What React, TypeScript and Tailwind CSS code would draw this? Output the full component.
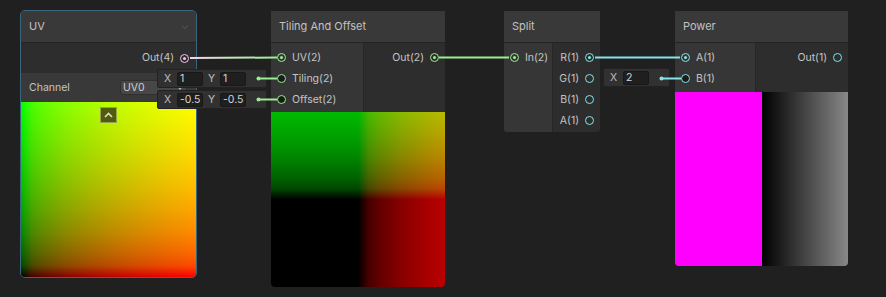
import React from 'react'

type Kind = 'v1' | 'v2' | 'v4'

const ringCls: Record<Kind, string> = {
  v1: 'border-[#84e4e7]',
  v2: 'border-[#9aef92]',
  v4: 'border-[#f2c3ee]',
}
const dotCls: Record<Kind, string> = {
  v1: 'bg-[#84e4e7]',
  v2: 'bg-[#9aef92]',
  v4: 'bg-[#f2c3ee]',
}

function Port({ kind, connected = false, filled = false }: { kind: Kind; connected?: boolean; filled?: boolean }) {
  return (
    <span
      className={`flex h-[9px] w-[9px] shrink-0 items-center justify-center rounded-full border-[1.5px] ${ringCls[kind]} ${
        filled ? 'bg-[#1a1a1a]' : ''
      }`}
    >
      {connected && <span className={`h-[3px] w-[3px] rounded-full ${dotCls[kind]}`} />}
    </span>
  )
}

function InRow({ label, kind, connected, filled }: { label: string; kind: Kind; connected?: boolean; filled?: boolean }) {
  return (
    <div className="flex h-[21px] items-center gap-[6px] pl-[6px]">
      <Port kind={kind} connected={connected} filled={filled} />
      <span>{label}</span>
    </div>
  )
}

function OutRow({ label, kind, connected }: { label: string; kind: Kind; connected?: boolean }) {
  return (
    <div className="flex h-[21px] items-center justify-end gap-[6px] pr-[6px]">
      <span>{label}</span>
      <Port kind={kind} connected={connected} />
    </div>
  )
}

function Header({ title, children }: { title: string; children?: React.ReactNode }) {
  return (
    <div className="flex h-[32px] items-center justify-between border-b border-[#242424] bg-[#393939] pl-[8px] pr-[7px] text-[11px] text-[#c2c2c2]">
      <span>{title}</span>
      {children}
    </div>
  )
}

function VecField({ className, values }: { className: string; values: [string, string][] }) {
  return (
    <div
      className={`absolute flex h-[19px] items-center rounded-[2px] border border-[#222222] bg-[#313131] text-[10.5px] text-[#bdbdbd] ${className}`}
    >
      {values.map(([axis, v], i) => (
        <React.Fragment key={axis}>
          <span className={`${i === 0 ? 'w-[19px]' : 'w-[17px]'} text-center`}>{axis}</span>
          <span className="h-[14px] w-[26px] rounded-[2px] border border-[#181818] bg-[#1f1f1f] pl-[2px] leading-[12px] text-[#d4d4d4]">
            {v}
          </span>
        </React.Fragment>
      ))}
    </div>
  )
}

export default function App() {
  return (
    <div className="relative h-[297px] w-[886px] overflow-hidden bg-[#202020] font-['Inter','Noto_Sans',sans-serif] text-[10.5px] text-[#c4c4c4]">
      {/* UV */}
      <div className="absolute left-[20px] top-[10px] w-[177px] overflow-hidden rounded-[5px] border border-[#3a6680] bg-[#2d2d2d]">
        <Header title="UV">
          <svg width="8" height="6" viewBox="0 0 8 6" className="mt-[1px]">
            <polyline points="1,1.5 4,4.5 7,1.5" fill="none" stroke="#5a5a5a" strokeWidth="1" />
          </svg>
        </Header>
        <div className="flex h-[30px] items-center justify-end gap-[6px] bg-[#2d2d2d] pr-[7px]">
          <span>Out(4)</span>
          <Port kind="v4" connected />
        </div>
        <div className="flex h-[29px] items-center justify-between bg-[#393939] pl-[8px] pr-[9px]">
          <span>Channel</span>
          <div className="flex h-[15px] w-[67px] items-center justify-between rounded-[3px] border border-[#303030] bg-[#474747] pl-[2px] pr-[3px] text-[#cfcfcf]">
            <span>UV0</span>
            <svg width="6" height="4" viewBox="0 0 6 4">
              <polygon points="0,0 6,0 3,4" fill="#bbbbbb" />
            </svg>
          </div>
        </div>
        <div className="relative h-[175px] bg-[linear-gradient(to_bottom,rgb(0,255,0),rgb(0,240,0)_12.5%,rgb(0,224,0)_25%,rgb(0,206,0)_37.5%,rgb(0,186,0)_50%,rgb(0,163,0)_62.5%,rgb(0,136,0)_75%,rgb(0,99,0)_87.5%,rgb(0,72,0)_93.75%,rgb(0,0,0)),linear-gradient(to_right,rgb(0,0,0),rgb(72,0,0)_6.25%,rgb(99,0,0)_12.5%,rgb(136,0,0)_25%,rgb(163,0,0)_37.5%,rgb(186,0,0)_50%,rgb(206,0,0)_62.5%,rgb(224,0,0)_75%,rgb(240,0,0)_87.5%,rgb(255,0,0))] bg-blend-screen">
          <div className="absolute left-[79px] top-[5px] flex h-[16px] w-[17px] items-center justify-center border border-[#9aa24e] bg-[#4f5c0c]">
            <svg width="9" height="6" viewBox="0 0 9 6">
              <polyline points="1,5 4.5,1.5 8,5" fill="none" stroke="#e0e0c0" strokeWidth="1.6" />
            </svg>
          </div>
        </div>
      </div>

      {/* Tiling And Offset */}
      <div className="absolute left-[271px] top-[11px] w-[174px] overflow-hidden rounded-b-[4px] bg-[#2d2d2d]">
        <Header title="Tiling And Offset" />
        <div className="flex h-[69px]">
          <div className="w-[93px] border-r border-[#262626] bg-[#363636] pt-[4px]">
            <InRow label="UV(2)" kind="v2" connected />
            <InRow label="Tiling(2)" kind="v2" filled />
            <InRow label="Offset(2)" kind="v2" filled />
          </div>
          <div className="flex-1 pt-[4px]">
            <OutRow label="Out(2)" kind="v2" connected />
          </div>
        </div>
        <div className="h-[175px] bg-[linear-gradient(to_bottom,rgb(0,186,0),rgb(0,163,0)_12.5%,rgb(0,136,0)_25%,rgb(0,99,0)_37.5%,rgb(0,72,0)_43.75%,rgb(0,0,0)_50%,rgb(0,0,0)),linear-gradient(to_right,rgb(0,0,0),rgb(0,0,0)_50%,rgb(72,0,0)_56.25%,rgb(99,0,0)_62.5%,rgb(136,0,0)_75%,rgb(163,0,0)_87.5%,rgb(186,0,0))] bg-blend-screen" />
      </div>

      {/* Split */}
      <div className="absolute left-[504px] top-[11px] w-[96px] overflow-hidden rounded-b-[3px] bg-[#2d2d2d]">
        <Header title="Split" />
        <div className="flex h-[89px]">
          <div className="w-[49px] border-r border-[#262626] bg-[#363636] pt-[4px]">
            <InRow label="In(2)" kind="v2" connected />
          </div>
          <div className="flex-1 pt-[4px]">
            <OutRow label="R(1)" kind="v1" connected />
            <OutRow label="G(1)" kind="v1" />
            <OutRow label="B(1)" kind="v1" />
            <OutRow label="A(1)" kind="v1" />
          </div>
        </div>
      </div>

      {/* Power */}
      <div className="absolute left-[675px] top-[11px] w-[173px] overflow-hidden rounded-b-[4px] bg-[#2d2d2d]">
        <Header title="Power" />
        <div className="flex h-[49px]">
          <div className="w-[81px] border-r border-[#262626] bg-[#363636] pt-[4px]">
            <InRow label="A(1)" kind="v1" connected />
            <InRow label="B(1)" kind="v1" filled />
          </div>
          <div className="flex-1 pt-[4px]">
            <OutRow label="Out(1)" kind="v1" />
          </div>
        </div>
        <div className="flex h-[174px]">
          <div className="w-[87px] bg-[#ff00ff]" />
          <div className="flex-1 bg-[linear-gradient(to_right,#000000,#888888)]" />
        </div>
      </div>

      {/* inline input fields */}
      <VecField className="left-[157px] top-[69px] w-[110px]" values={[['X', '1'], ['Y', '1']]} />
      <VecField className="left-[157px] top-[90px] w-[110px]" values={[['X', '-0.5'], ['Y', '-0.5']]} />
      <VecField className="left-[603px] top-[68px] w-[67px]" values={[['X', '2']]} />

      {/* wires */}
      <svg className="pointer-events-none absolute left-0 top-0" width="886" height="297">
        <defs>
          <linearGradient id="uvwire" gradientUnits="userSpaceOnUse" x1="190" y1="0" x2="277" y2="0">
            <stop offset="0" stopColor="#f4d4f0" />
            <stop offset="1" stopColor="#9aef92" />
          </linearGradient>
        </defs>
        <line x1="190" y1="58" x2="277" y2="57.5" stroke="url(#uvwire)" strokeWidth="2" />
        <line x1="439" y1="57.5" x2="509" y2="57.5" stroke="#9aef92" strokeWidth="2" />
        <line x1="595" y1="57.5" x2="680" y2="57.5" stroke="#84e4e7" strokeWidth="2" />

        <circle cx="258.5" cy="78.5" r="2" fill="#9aef92" />
        <line x1="260" y1="78.5" x2="277" y2="78.5" stroke="#9aef92" strokeWidth="2" />
        <circle cx="258.5" cy="99.5" r="2" fill="#9aef92" />
        <line x1="260" y1="99.5" x2="277" y2="99.5" stroke="#9aef92" strokeWidth="2" />
        <circle cx="661.5" cy="78.5" r="2" fill="#84e4e7" />
        <line x1="663" y1="78.5" x2="681" y2="78.5" stroke="#84e4e7" strokeWidth="2" />
      </svg>
    </div>
  )
}
